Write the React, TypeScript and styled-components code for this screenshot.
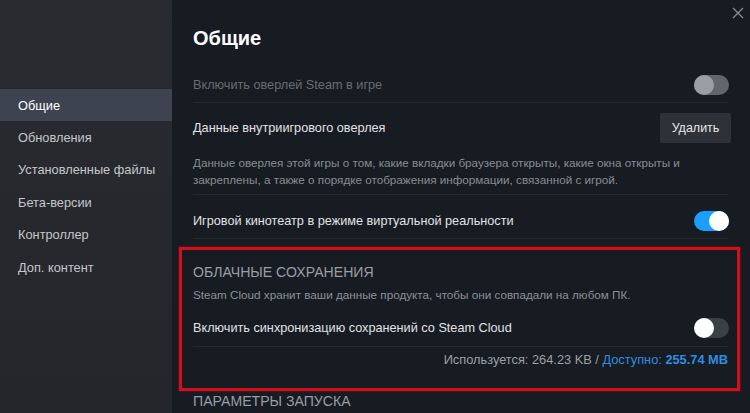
import React from "react";
import styled, { createGlobalStyle } from "styled-components";

const Global = createGlobalStyle`
  html, body { margin: 0; padding: 0; background: #171b22; }
  body { font-family: "Liberation Sans", Arial, sans-serif; }
  * { box-sizing: border-box; }
`;

const Window = styled.div`
  position: relative;
  display: flex;
  width: 750px;
  height: 413px;
  overflow: hidden;
  background: #171b22;
`;

const Sidebar = styled.nav`
  width: 172px;
  flex-shrink: 0;
  padding-top: 89px;
  background: linear-gradient(180deg, #292b30 0%, #24262b 100%);
  display: flex;
  flex-direction: column;
`;

const NavItem = styled.div<{ $active?: boolean }>`
  height: 32.4px;
  display: flex;
  align-items: center;
  padding-left: 18px;
  font-size: 12.8px;
  color: ${(p) => (p.$active ? "#ffffff" : "#c5c7ca")};
  background: ${(p) => (p.$active ? "#3d4350" : "transparent")};
`;

const Main = styled.main`
  flex: 1;
  padding: 26px 22px 0 21px;
  display: flex;
  flex-direction: column;
`;

const Title = styled.h1`
  margin: 0 0 18px;
  height: 24px;
  line-height: 24px;
  font-size: 20px;
  font-weight: 700;
  color: #ffffff;
`;

const Row = styled.div<{ $pt?: number; $pb?: number; $h?: number }>`
  display: flex;
  align-items: center;
  justify-content: space-between;
  padding-top: ${(p) => p.$pt ?? 0}px;
  padding-bottom: ${(p) => p.$pb ?? 0}px;
  ${(p) => (p.$h ? `height: ${p.$h}px;` : "")}
  border-bottom: 1px solid #252a31;
`;

const Block = styled.div`
  padding: 10px 0 6px;
  border-bottom: 1px solid #252a31;
`;

const BlockHead = styled.div`
  display: flex;
  align-items: center;
  justify-content: space-between;
`;

const Label = styled.span<{ $dim?: boolean }>`
  font-size: 12.7px;
  color: ${(p) => (p.$dim ? "#686d75" : "#e2e3e5")};
`;

const Desc = styled.p`
  margin: 11px 0 0;
  font-size: 11.7px;
  line-height: 17px;
  color: #878d95;
`;

const Button = styled.button`
  width: 71px;
  height: 30px;
  margin-right: -3px;
  border: none;
  border-radius: 2px;
  background: #2e3238;
  color: #e6e7e8;
  font-family: inherit;
  font-size: 12.5px;
  padding: 0;
`;

const Track = styled.div<{ $on?: boolean; $disabled?: boolean }>`
  width: 35px;
  height: 20px;
  border-radius: 10px;
  flex-shrink: 0;
  margin-right: -1px;
  display: flex;
  align-items: center;
  justify-content: ${(p) => (p.$on ? "flex-end" : "flex-start")};
  background: ${(p) => (p.$disabled ? "#61656d" : p.$on ? "#1a9fff" : "#3b3f46")};
`;

const Knob = styled.div<{ $disabled?: boolean }>`
  width: 20px;
  height: 20px;
  border-radius: 50%;
  background: ${(p) => (p.$disabled ? "#9a9ea5" : "#ffffff")};
`;

const Toggle = ({ on, disabled }: { on?: boolean; disabled?: boolean }) => (
  <Track $on={on} $disabled={disabled}>
    <Knob $disabled={disabled} />
  </Track>
);

const CloudBox = styled.section`
  margin: 8px -12px 0 -14px;
  padding: 13px 9px 20px 11px;
  border: 3px solid #d0111b;
  box-shadow: 0 0 2px rgba(220, 20, 30, 0.7);
`;

const SectionHead = styled.h2`
  margin: 0;
  font-size: 14.1px;
  line-height: 18px;
  font-weight: 400;
  color: #9a9ea5;
  text-transform: uppercase;
`;

const SectionDesc = styled.p`
  margin: 6px 0 7px;
  font-size: 11.7px;
  line-height: 16px;
  color: #8b9098;
`;

const Usage = styled.div`
  margin-top: 5px;
  text-align: right;
  font-size: 12.8px;
  line-height: 16px;
  color: #9ba0a7;
`;

const Blue = styled.span<{ $bold?: boolean }>`
  color: #2d8fe0;
  font-weight: ${(p) => (p.$bold ? 700 : 400)};
`;

const NextHead = styled(SectionHead)`
  margin-top: 1px;
`;

const Close = styled.div`
  position: absolute;
  top: 5px;
  right: 6px;
  width: 12px;
  height: 12px;
`;

export default function App() {
  const nav = [
    "Общие",
    "Обновления",
    "Установленные файлы",
    "Бета-версии",
    "Контроллер",
    "Доп. контент",
  ];
  return (
    <>
      <Global />
      <Window>
        <Sidebar>
          {nav.map((n, i) => (
            <NavItem key={n} $active={i === 0}>
              {n}
            </NavItem>
          ))}
        </Sidebar>
        <Main>
          <Title>Общие</Title>
          <Row $h={35}>
            <Label $dim>Включить оверлей Steam в игре</Label>
            <Toggle disabled />
          </Row>
          <Block>
            <BlockHead>
              <Label>Данные внутриигрового оверлея</Label>
              <Button>Удалить</Button>
            </BlockHead>
            <Desc>
              Данные оверлея этой игры о том, какие вкладки браузера открыты, какие окна открыты и
              <br />
              закреплены, а также о порядке отображения информации, связанной с игрой.
            </Desc>
          </Block>
          <Row $pt={16} $pb={7}>
            <Label>Игровой кинотеатр в режиме виртуальной реальности</Label>
            <Toggle on />
          </Row>
          <CloudBox>
            <SectionHead>Облачные сохранения</SectionHead>
            <SectionDesc>
              Steam Cloud хранит ваши данные продукта, чтобы они совпадали на любом ПК.
            </SectionDesc>
            <Row $h={37}>
              <Label>Включить синхронизацию сохранений со Steam Cloud</Label>
              <Toggle />
            </Row>
            <Usage>
              Используется: 264.23 KB / <Blue>Доступно: </Blue>
              <Blue $bold>255.74 MB</Blue>
            </Usage>
          </CloudBox>
          <NextHead>Параметры запуска</NextHead>
        </Main>
        <Close>
          <svg width="12" height="12" viewBox="0 0 12 12">
            <path d="M1 1 L11 11 M11 1 L1 11" stroke="#8a8e95" strokeWidth="1.3" />
          </svg>
        </Close>
      </Window>
    </>
  );
}
